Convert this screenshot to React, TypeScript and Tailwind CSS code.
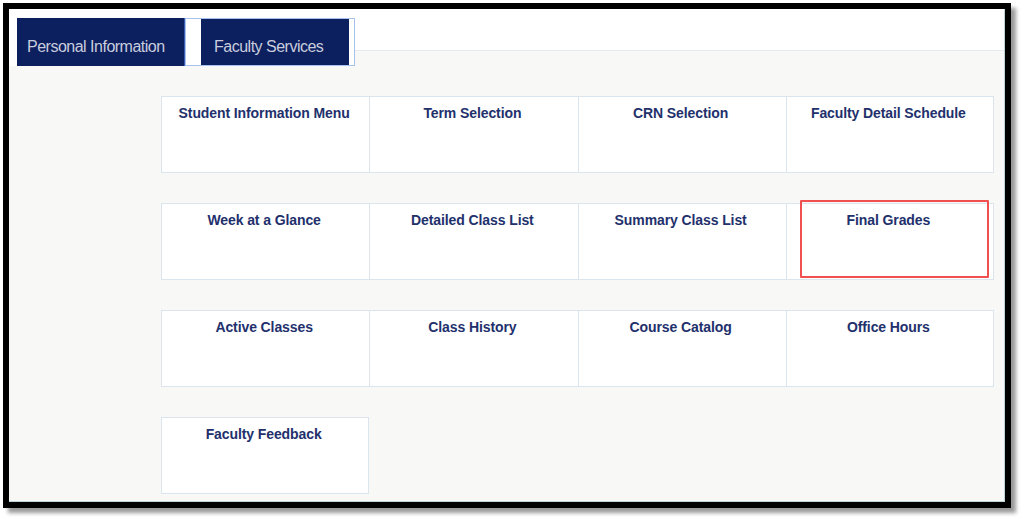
import React from "react";

const rows: string[][] = [
  ["Student Information Menu", "Term Selection", "CRN Selection", "Faculty Detail Schedule"],
  ["Week at a Glance", "Detailed Class List", "Summary Class List", "Final Grades"],
  ["Active Classes", "Class History", "Course Catalog", "Office Hours"],
  ["Faculty Feedback"],
];

const MenuCard = ({ label, last, marked }: { label: string; last: boolean; marked?: boolean }) => {
  return (
    <div
      className={
        "relative h-[77px] bg-white border-y border-l border-[#dbe5ee] pt-[6px] pr-[3px] text-center text-[14px] font-bold tracking-[-0.1px] text-[#22306c] " +
        (last ? "border-r" : "")
      }
    >
      {label}
      {marked && (
        <div className="absolute left-[13px] right-[4px] -top-[4px] bottom-px border-2 border-[#f05050] rounded-[1px]" />
      )}
    </div>
  );
};

export default function App() {
  return (
    <div className="min-h-screen bg-white pl-[3px] pt-[3px]" style={{ fontFamily: '"Liberation Sans", Arial, sans-serif' }}>
      <div className="flex h-[505px] w-[1008px] flex-col border-[6px] border-black bg-white shadow-[5px_5px_4px_rgba(0,0,0,0.4)]">
        <div className="flex flex-1 flex-col border-r border-b border-[#bcd3da]">
          {/* tab strip */}
          <div className="flex items-start">
            <div className="w-[8px] h-[57px] bg-white" />
            <div className="mt-[9px] flex h-[48px]">
              <div className="w-[168px] border-r border-[#3a5bb0] bg-[#0c1f5e] pl-[10px] pt-[17px] text-[16px] tracking-[-0.5px] text-[#c9cdde]">
                Personal Information
              </div>
              <div className="flex border border-[#a7c2ef] bg-white pl-[15px] pr-[5px]">
                <div className="w-[148px] bg-[#0c1f5e] pl-[13px] pt-[16px] text-[16px] tracking-[-0.5px] text-[#c9cdde]">
                  Faculty Services
                </div>
              </div>
            </div>
            <div className="flex h-[57px] flex-1 flex-col">
              <div className="h-[42px] border-b border-[#e3ebf1] bg-white" />
              <div className="flex-1 bg-[#f8f8f6]" />
            </div>
          </div>

          {/* menu grid */}
          <div className="flex-1 bg-[#f8f8f6] pl-[152px] pt-[30px]">
            <div className="flex w-[833px] flex-col gap-[30px]">
              {rows.map((row, i) => (
                <div key={i} className="grid grid-cols-4">
                  {row.map((label, j) => (
                    <MenuCard
                      key={label}
                      label={label}
                      last={j === row.length - 1}
                      marked={label === "Final Grades"}
                    />
                  ))}
                </div>
              ))}
            </div>
          </div>
        </div>
      </div>
    </div>
  );
}
